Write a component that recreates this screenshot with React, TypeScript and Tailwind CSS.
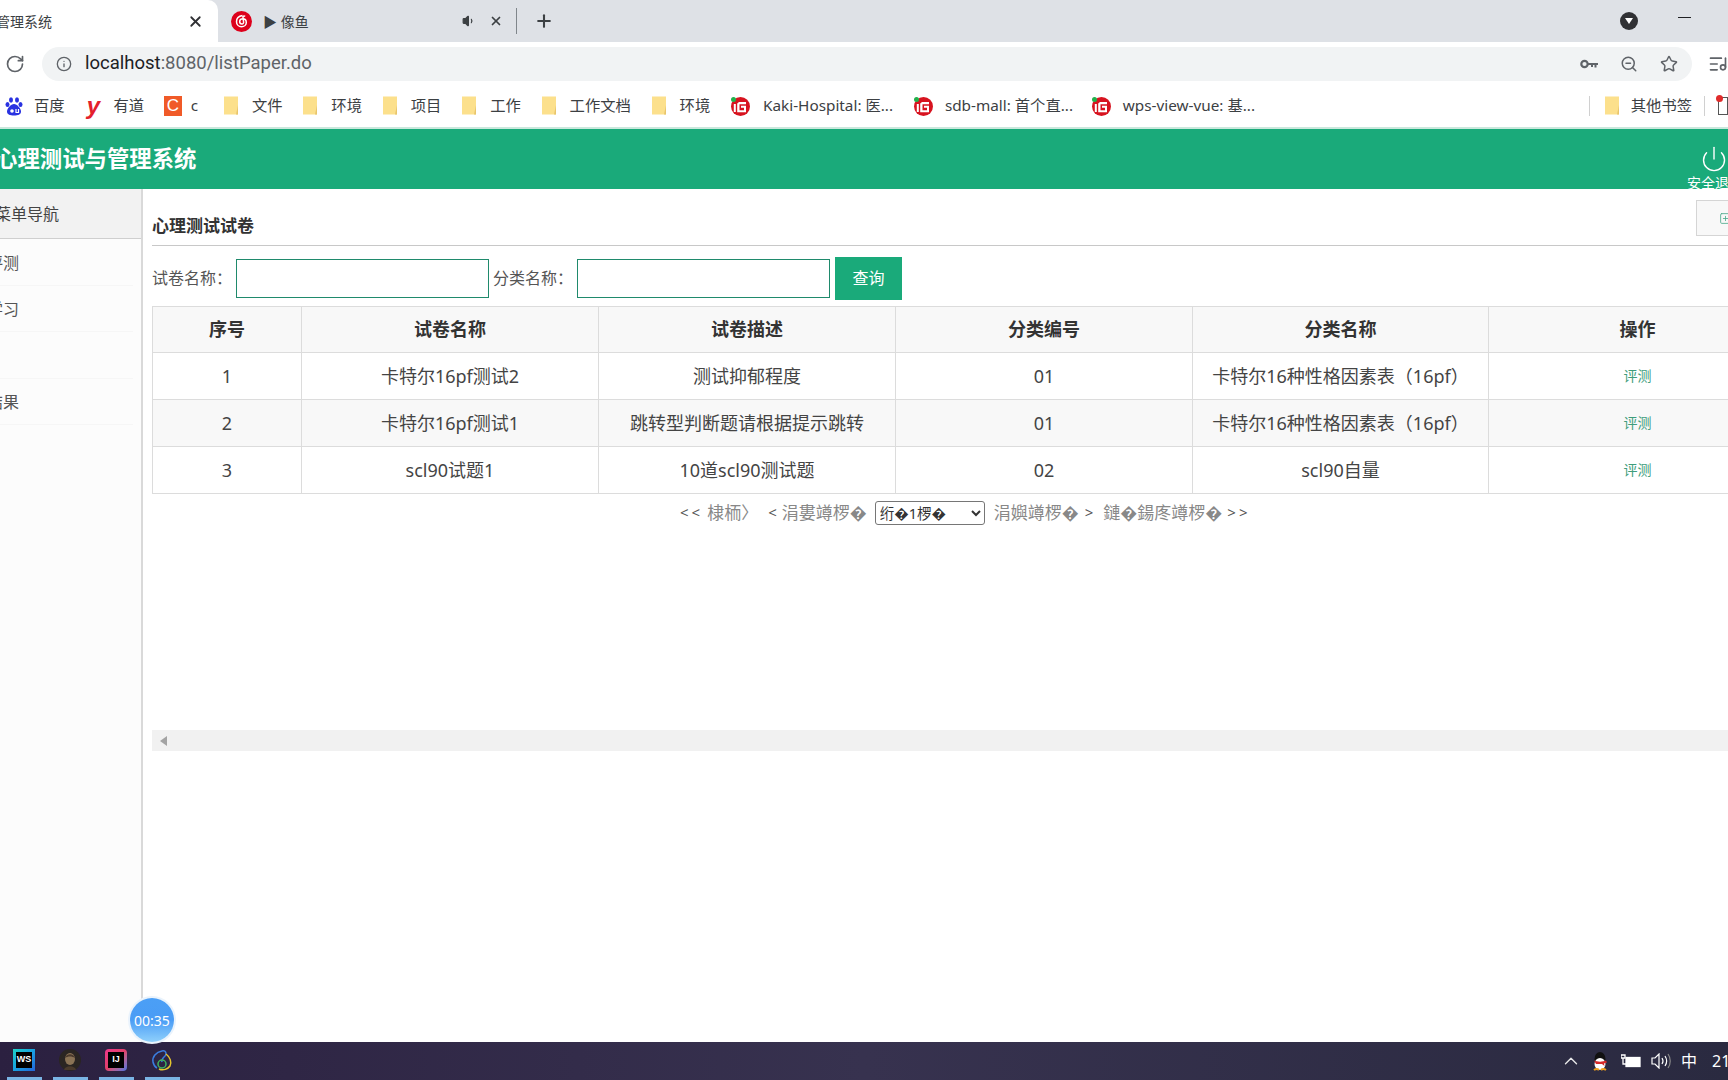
import React from 'react';
import { ChevronUp, Info, ListMusic, Plus, Power, RotateCw, SquarePlus, Star, Volume1, X, ZoomOut } from 'lucide-react';

const cjk = "font-['Noto_Sans','Noto_Sans_CJK_SC',sans-serif]";

const Folder = () => (
  <svg width="16" height="19" viewBox="0 0 16 19" className="shrink-0">
    <rect x="1" y="0.5" width="14" height="18" fill="#fce08c" />
    <path d="M13 18.5h2V9z" fill="#e8c56c" />
  </svg>
);

const GiteeIcon = () => (
  <svg width="20" height="20" viewBox="0 0 20 20" className="shrink-0">
    <circle cx="10.5" cy="10.5" r="9.5" fill="#d7131f" />
    <path d="M9 6h7v2.2H9.5v6H14v-2.5h-3V9.8h5v6.5H7.2V7.5z" fill="#fff" />
    <rect x="3.8" y="8" width="2" height="8" fill="#fff" />
    <circle cx="3.5" cy="3.5" r="2.5" fill="#22b04b" />
  </svg>
);

const NeteaseIcon = () => (
  <svg width="21" height="21" viewBox="0 0 21 21" className="shrink-0">
    <circle cx="10.5" cy="10.5" r="10.5" fill="#dd001b" />
    <path d="M11.5 4.5c-3.5 .5-6 3-6 6.2 0 3 2.300 5 5 5s4.800-1.900 4.800-4.300-1.800-3.700-3.600-3.700-3 1.300-3 2.800 1 2.500 2.200 2.500 1.900-1 1.700-2.100L12 6.300c-.2-1 .8-1.700 2.200-1" fill="none" stroke="#fff" strokeWidth="1.5" />
  </svg>
);

const BaiduIcon = () => (
  <svg width="18" height="20" viewBox="0 0 18 20" className="shrink-0">
    <ellipse cx="6" cy="4" rx="2" ry="2.7" fill="#2932e1" />
    <ellipse cx="12" cy="4" rx="2" ry="2.7" fill="#2932e1" />
    <ellipse cx="2.5" cy="8.5" rx="2" ry="2.5" fill="#2932e1" />
    <ellipse cx="15.5" cy="8.5" rx="2" ry="2.5" fill="#2932e1" />
    <path d="M9 8c-3 0-7 4.500-7 7.500C2 18.500 5 19.500 9 19.500s7-1 7-4C16 12.500 12 8 9 8z" fill="#2932e1" />
    <circle cx="7" cy="15" r="1.8" fill="#fff" />
    <path d="M11 13v3.500h2.500V13" fill="none" stroke="#fff" strokeWidth="1.2" />
  </svg>
);

// the first three sit tighter than the folders
const bookmarks: { icon: React.ReactNode; label: string; cls: string }[] = [
  { icon: <BaiduIcon />, label: '百度', cls: 'gap-x-[11px]' },
  { icon: <span className="w-[18px] text-center text-[24px] leading-[20px] font-black italic text-[#e3202c] font-['Liberation_Sans',sans-serif]">y</span>, label: '有道', cls: 'gap-x-[11px]' },
  { icon: <span className="w-[18px] h-[20px] flex items-center justify-center bg-[#f05a28] text-white text-[17px] leading-none font-['Liberation_Sans',sans-serif]">C</span>, label: 'c', cls: 'gap-x-[9px] mr-[5px]' },
  { icon: <Folder />, label: '文件', cls: 'gap-x-[13px]' },
  { icon: <Folder />, label: '环境', cls: 'gap-x-[13px]' },
  { icon: <Folder />, label: '项目', cls: 'gap-x-[13px]' },
  { icon: <Folder />, label: '工作', cls: 'gap-x-[13px]' },
  { icon: <Folder />, label: '工作文档', cls: 'gap-x-[13px]' },
  { icon: <Folder />, label: '环境', cls: 'gap-x-[13px]' },
  { icon: <GiteeIcon />, label: 'Kaki-Hospital: 医...', cls: 'gap-x-[13px]' },
  { icon: <GiteeIcon />, label: 'sdb-mall: 首个直...', cls: 'gap-x-[12px] mr-[-2px]' },
  { icon: <GiteeIcon />, label: 'wps-view-vue: 基...', cls: 'gap-x-[12px]' },
];

const rows = [
  ['1', '卡特尔16pf测试2', '测试抑郁程度', '01', '卡特尔16种性格因素表（16pf）'],
  ['2', '卡特尔16pf测试1', '跳转型判断题请根据提示跳转', '01', '卡特尔16种性格因素表（16pf）'],
  ['3', 'scl90试题1', '10道scl90测试题', '02', 'scl90自量'],
];

const headers = ['序号', '试卷名称', '试卷描述', '分类编号', '分类名称', '操作'];

const TabStrip = () => (
  <div className="h-[42px] shrink-0 bg-[#dee1e6] flex items-center text-[#3c4043]">
    <div className="w-[218px] h-full bg-white rounded-tr-[10px] flex items-center pr-[14px]">
      <span className="text-[14px] ml-[-4px]">管理系统</span>
      <X className="w-[17px] h-[17px] ml-auto text-[#303134]" strokeWidth={2.5} />
    </div>
    <div className="ml-[13px] flex items-center w-[272px]">
      <NeteaseIcon />
      <span className="ml-[11px] text-[14px]">▶ 像鱼</span>
      <Volume1 className="w-[14px] h-[14px] ml-auto fill-[#3c4043]" />
      <X className="w-[14px] h-[14px] ml-[13px]" strokeWidth={3} />
    </div>
    <div className="ml-[13px] w-px h-[26px] bg-[#80868b]" />
    <Plus className="w-[20px] h-[20px] ml-[17px] text-[#3c4043]" strokeWidth={2.5} />
    <div className="ml-auto w-[18px] h-[18px] rounded-full bg-[#303134] flex items-center justify-center">
      <span className="w-0 h-0 border-x-[4px] border-x-transparent border-t-[6px] border-t-white" />
    </div>
    <div className="ml-[40px] mr-[37px] mb-[8px] w-[13px] h-px bg-[#202124]" />
  </div>
);

const AddressBar = () => (
  <div className="h-[42px] pt-[2px] shrink-0 bg-white flex items-center text-[#5f6368]">
    <div className="w-[42px] pl-[5px]">
      <RotateCw className="w-[20px] h-[20px]" strokeWidth={2} />
    </div>
    <div className="w-[1650px] h-[34px] bg-[#f1f3f4] rounded-full flex items-center pl-[14px] pr-[14px]">
      <Info className="w-[16px] h-[16px]" strokeWidth={2} />
      <span className="ml-[13px] text-[18.5px] font-['Roboto',sans-serif] text-[#202124]">
        localhost<span className="text-[#5f6368]">:8080/listPaper.do</span>
      </span>
      <svg width="18" height="10" viewBox="0 0 18 10" className="ml-auto">
        <circle cx="4.5" cy="5" r="3.2" fill="none" stroke="#5f6368" strokeWidth="2.2" />
        <path d="M8 4h10v2h-1.500v2.500h-2V6h-1.500v2h-2V6H8z" fill="#5f6368" />
      </svg>
      <ZoomOut className="w-[18px] h-[18px] ml-[22px]" strokeWidth={2} />
      <Star className="w-[18px] h-[18px] ml-[22px]" strokeWidth={2} />
    </div>
    <ListMusic className="w-[20px] h-[20px] ml-[16px] shrink-0" strokeWidth={2} />
  </div>
);

const BookmarkBar = () => (
  <div className="h-[43px] shrink-0 bg-white flex items-center pl-[5px] text-[15.3px] text-[#3c4043] whitespace-nowrap">
    <div className="flex items-center gap-x-[19.8px]">
      {bookmarks.map((b, i) => (
        <div key={i} className={`flex items-center ${b.cls}`}>
          {b.icon}
          <span>{b.label}</span>
        </div>
      ))}
    </div>
    <div className="ml-auto w-px h-[20px] bg-[#d0d0d0] shrink-0" />
    <div className="ml-[14px] flex items-center gap-x-[11px] shrink-0">
      <Folder />
      <span>其他书签</span>
    </div>
    <div className="ml-[12px] w-px h-[20px] bg-[#d0d0d0] shrink-0" />
    <div className="ml-[13px] w-[10px] h-[18px] border border-[#555] relative shrink-0">
      <span className="absolute left-[-3px] top-[-3px] w-[7px] h-[7px] rounded-full bg-[#e02b2b]" />
    </div>
  </div>
);

const Sidebar = () => (
  <aside className="w-[143px] shrink-0 bg-[#fcfcfc] border-r-2 border-[#d9d9d9] text-[#555] text-[16px] overflow-hidden">
    <div className="h-[50px] bg-[#f2f2f2] border-b border-[#cfcfcf] flex items-center text-[#444]">
      <span className="ml-[-5px]">菜单导航</span>
    </div>
    {['评测', '学习', '', '结果'].map((item, i) => (
      <div key={i} className="h-[46.5px] pt-[2px] mr-[8px] border-b border-[#f6f6f6] flex items-center">
        <span className="ml-[-13px]">{item}</span>
      </div>
    ))}
  </aside>
);

const PaperTable = () => (
  <table className="w-[1634px] table-fixed border-collapse text-[18px] text-[#444]">
    <colgroup>
      <col className="w-[149px]" />
      <col className="w-[297px]" />
      <col className="w-[297px]" />
      <col className="w-[297px]" />
      <col className="w-[296px]" />
      <col className="w-[298px]" />
    </colgroup>
    <thead>
      <tr className="h-[46px] bg-[#f8f8f8]">
        {headers.map((h) => (
          <th key={h} className="border border-[#dcdcdc] font-bold text-[#333]">{h}</th>
        ))}
      </tr>
    </thead>
    <tbody>
      {rows.map((row, i) => (
        <tr key={row[0]} className={i === 1 ? 'h-[47px] bg-[#f8f8f8]' : 'h-[47px] bg-white'}>
          {row.map((cell, j) => (
            <td key={j} className="border border-[#dcdcdc] text-center">{cell}</td>
          ))}
          <td className="border border-[#dcdcdc] text-center text-[14px] pb-[2px] text-[#3f9d7c]">评测</td>
        </tr>
      ))}
    </tbody>
  </table>
);

const Pager = () => (
  <div className="h-[37px] flex items-center pl-[528px] text-[17px] text-[#888] whitespace-nowrap">
    <span className="text-[15px] tracking-[3px] text-[#555]">&lt;&lt;</span>
    <span className="ml-[4px]">棣栭〉</span>
    <span className="ml-[10px] text-[15px] text-[#555]">&lt;</span>
    <span className="ml-[5px]">涓婁竴椤�</span>
    <select className="ml-[8px] w-[110px] h-[24px] border border-[#767676] rounded-[3px] text-[14.5px] text-[#333] bg-white" defaultValue="1">
      <option value="1">绗�1椤�</option>
    </select>
    <span className="ml-[9px]">涓嬩竴椤�</span>
    <span className="ml-[6px] text-[15px] text-[#555]">&gt;</span>
    <span className="ml-[10px]">鏈�鍚庝竴椤�</span>
    <span className="ml-[5px] text-[15px] tracking-[3px] text-[#555]">&gt;&gt;</span>
  </div>
);

const Main = () => (
  <main className="w-[1634px] ml-[9px] shrink-0">
    <div className="h-[46px] mt-[11px] border-b border-[#c8c8c8] flex justify-between items-start">
      <span className="mt-[13px] text-[17px] font-bold text-[#333]">心理测试试卷</span>
      <div className="w-[90px] h-[36px] border border-[#d5d5d5] bg-[#f8f8f8] flex items-center pl-[22px]">
        <SquarePlus className="w-[13px] h-[13px] text-[#4aa98a]" strokeWidth={1.5} />
      </div>
    </div>
    <div className="h-[60px] pt-[4px] flex items-center text-[16px] text-[#555]">
      <label className="w-[84px]">试卷名称：</label>
      <input className="w-[253px] h-[39px] border border-[#1f8a6c] outline-none" />
      <label className="w-[84px] ml-[4px]">分类名称：</label>
      <input className="w-[253px] h-[39px] border border-[#1f8a6c] outline-none" />
      <button className="w-[67px] h-[43px] ml-[5px] bg-[#1aaa7a] text-white text-[16px]">查询</button>
    </div>
    <PaperTable />
    <Pager />
    <div className="h-[21px] mt-[199px] bg-[#f1f1f1] flex items-center pl-[8px]">
      <span className="w-0 h-0 border-y-[5px] border-y-transparent border-r-[7px] border-r-[#a3a3a3]" />
    </div>
  </main>
);

const TaskSlot = ({ children }: { children: React.ReactNode }) => (
  <div className="w-[46px] h-[38px] relative flex items-center justify-center pb-[3px]">
    {children}
    <span className="absolute left-[6px] bottom-0 w-[35px] h-[3px] bg-[#7ab4e4]" />
  </div>
);

const Taskbar = () => (
  <div className="h-[38px] shrink-0 bg-gradient-to-r from-[#2b2040] via-[#37324f] to-[#2a2a40] flex items-center text-white">
    <div className="flex ml-[1px]">
      <TaskSlot>
        <div className="w-[22px] h-[22px] p-[3px] bg-gradient-to-br from-[#22d3c5] via-[#1aa0e0] to-[#2563d8]">
          <div className="w-full h-full bg-black flex items-center justify-center text-[9px] font-bold font-['Liberation_Sans',sans-serif]">WS</div>
        </div>
      </TaskSlot>
      <TaskSlot>
        <svg width="22" height="22" viewBox="0 0 22 22">
          <circle cx="11" cy="11" r="11" fill="#2a2522" />
          <ellipse cx="11" cy="10" rx="5" ry="6" fill="#8a7355" />
          <path d="M6 9c1-5 9-5 10 0-3-2-7-2-10 0zM5 21c1-5 11-5 12 0z" fill="#4a3a2c" />
        </svg>
      </TaskSlot>
      <TaskSlot>
        <div className="w-[22px] h-[22px] p-[3px] rounded-[4px] bg-gradient-to-br from-[#f0368a] via-[#e0406a] to-[#3b6fe0]">
          <div className="w-full h-full bg-black flex items-center justify-center text-[9px] font-bold font-['Liberation_Sans',sans-serif]">IJ</div>
        </div>
      </TaskSlot>
      <TaskSlot>
        <svg width="22" height="24" viewBox="0 0 22 24" fill="none" strokeWidth="1.5">
          <path d="M11 3C5 4 1 9 2 14c.6 3 2 5 4 6" stroke="#3a7de0" />
          <path d="M11 3c4-1 5 3 3 5-2 2-4 3-3 6" stroke="#3a7de0" />
          <path d="M15 6c4 3 6 8 4 12-2 3-7 5-11 3" stroke="#e6c52e" />
          <circle cx="11" cy="16" r="4" stroke="#3fb55f" />
        </svg>
      </TaskSlot>
    </div>
    <div className="ml-auto flex items-center whitespace-nowrap">
      <ChevronUp className="w-[22px] h-[22px] text-[#e8e8e8]" strokeWidth={1.5} />
      <svg width="18" height="21" viewBox="0 0 18 21" className="ml-[9px]">
        <ellipse cx="9" cy="8" rx="5.5" ry="7" fill="#111" />
        <ellipse cx="9" cy="13" rx="5.5" ry="6" fill="#fff" />
        <path d="M3 9.500c3 1.500 9 1.500 12 0l1 2-3 1 .5 2.500-2.500-2H5z" fill="#d62a2a" />
        <path d="M3 19c2-1.500 4-1 5 0M10 19c1-1 3-1.500 5 0" stroke="#f0a020" strokeWidth="2" fill="none" />
      </svg>
      <svg width="20" height="14" viewBox="0 0 20 14" className="ml-[12px]" fill="none" stroke="#fff" strokeWidth="1.3">
        <rect x="5" y="3.5" width="14" height="9" fill="#fff" />
        <path d="M0 1h4v3H0zM2 4v6h3" />
      </svg>
      <svg width="20" height="16" viewBox="0 0 20 16" className="ml-[10px]" fill="none" stroke="#fff" strokeWidth="1.2">
        <path d="M1 5h3l4-4v14l-4-4H1z" />
        <path d="M11 5c1.200 1.800 1.200 4.200 0 6M14 3c2 3 2 7 0 10" />
        <path d="M17 1c3 4 3 10 0 14" stroke="#888" />
      </svg>
      <span className="ml-[10px] text-[16px]">中</span>
      <span className="ml-[15px] w-[16px] text-[16px] font-['Noto_Sans',sans-serif] overflow-hidden">21:35</span>
    </div>
  </div>
);

export default function App() {
  return (
    <div className={`relative w-[1728px] h-[1080px] overflow-hidden flex flex-col bg-white ${cjk}`}>
      <TabStrip />
      <AddressBar />
      <BookmarkBar />
      <div className="h-[2px] shrink-0 bg-[#c9e8dc]" />
      <header className="h-[60px] shrink-0 bg-[#1aaa7a] flex items-center justify-between text-white">
        <span className="ml-[-5px] text-[22.4px] font-bold whitespace-nowrap">心理测试与管理系统</span>
        <div className="w-[41px] h-full pt-[16px] overflow-hidden flex flex-col items-start">
          <Power className="w-[28px] h-[28px] ml-[13px] shrink-0" strokeWidth={1.2} />
          <span className="mt-[1px] text-[14px] leading-[18px] whitespace-nowrap">安全退出</span>
        </div>
      </header>
      <div className="flex-1 flex min-h-0">
        <Sidebar />
        <Main />
      </div>
      <Taskbar />
      <div className="absolute left-[130px] top-[998px] w-[44px] h-[44px] rounded-full bg-gradient-to-b from-[#4b9ff6] via-[#4a9cf5] to-[#8fd0fb] ring-2 ring-[#eaf3fc] flex items-center justify-center text-white text-[14px] font-['Noto_Sans',sans-serif]">
        00:35
      </div>
    </div>
  );
}
